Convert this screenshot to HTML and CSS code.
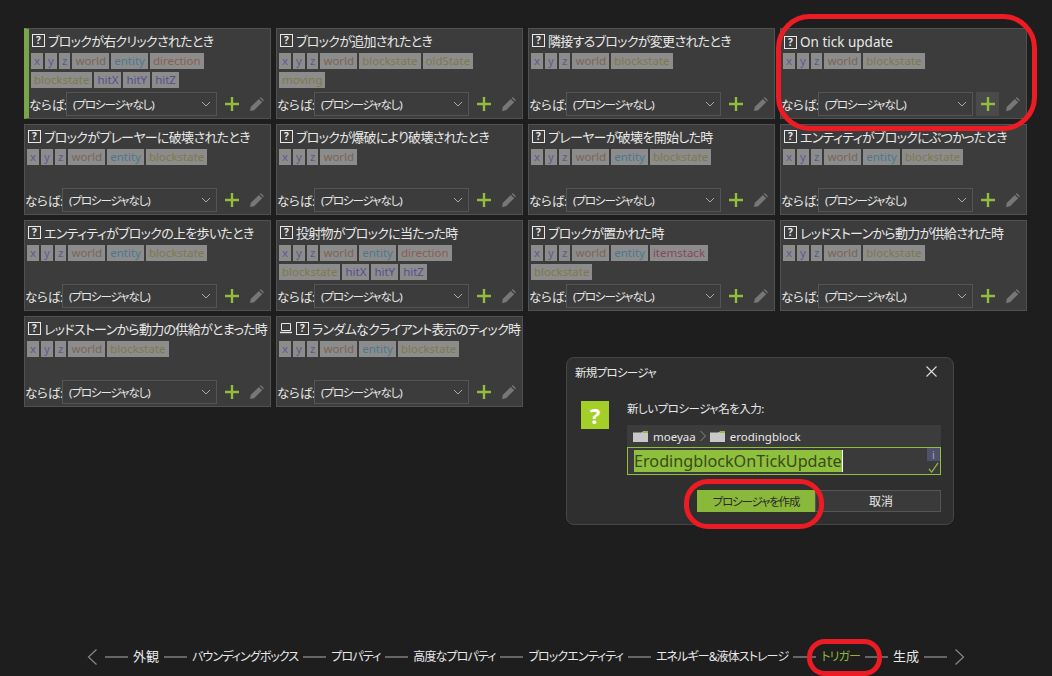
FILE: index.html
```html
<!DOCTYPE html>
<html lang="ja">
<head>
  <meta charset="UTF-8" />
  <title>トリガー</title>
  <link rel="stylesheet" href="styles.css">
</head>
<body>
  <svg class="sprites" width="0" height="0">
    <symbol id="plus" viewBox="0 0 14 14"><path d="M7 0v14M0 7h14" fill="none" stroke="#93bd3f" stroke-width="2.4"/></symbol>
    <symbol id="pencil" viewBox="0 0 16 16"><path d="M1 15l1-4.500L10.500 2l3.500 3.500L5.500 14zM11.500 1l1-1 3.500 3.500-1 1z" fill="#777"/></symbol>
    <symbol id="chev" viewBox="0 0 10 6"><path d="M1 1l4 4 4-4" fill="none" stroke="#aaa" stroke-width="1"/></symbol>
    <symbol id="folder" viewBox="0 0 15 11"><path d="M0 3h15v8H0z" fill="#c8c8c8"/><path d="M0 3V1.500h8L11 0h4v3z" fill="#c8c8c8"/><path d="M9 2l2.500-2H15v2z" fill="#8fc03c"/></symbol>
  </svg>

  <div class="page">
    <div class="triggers">
      <div class="card card-active">
        <div class="card-title"><span class="help">?</span>ブロックが右クリックされたとき</div>
        <div class="tags"><span class="tag num">x</span><span class="tag num">y</span><span class="tag num">z</span><span class="tag world">world</span><span class="tag entity">entity</span><span class="tag dir">direction</span><span class="tag state">blockstate</span><span class="tag hit">hitX</span><span class="tag hit">hitY</span><span class="tag hit">hitZ</span></div>
        <div class="card-row"><span class="then">ならば:</span><div class="proc">(プロシージャなし)<svg class="proc-arrow"><use href="#chev"/></svg></div><span class="tool"><svg class="plus"><use href="#plus"/></svg></span><span class="tool"><svg class="pencil"><use href="#pencil"/></svg></span></div>
      </div>
      <div class="card">
        <div class="card-title"><span class="help">?</span>ブロックが追加されたとき</div>
        <div class="tags"><span class="tag num">x</span><span class="tag num">y</span><span class="tag num">z</span><span class="tag world">world</span><span class="tag state">blockstate</span><span class="tag state">oldState</span><span class="tag state">moving</span></div>
        <div class="card-row"><span class="then">ならば:</span><div class="proc">(プロシージャなし)<svg class="proc-arrow"><use href="#chev"/></svg></div><span class="tool"><svg class="plus"><use href="#plus"/></svg></span><span class="tool"><svg class="pencil"><use href="#pencil"/></svg></span></div>
      </div>
      <div class="card">
        <div class="card-title"><span class="help">?</span>隣接するブロックが変更されたとき</div>
        <div class="tags"><span class="tag num">x</span><span class="tag num">y</span><span class="tag num">z</span><span class="tag world">world</span><span class="tag state">blockstate</span></div>
        <div class="card-row"><span class="then">ならば:</span><div class="proc">(プロシージャなし)<svg class="proc-arrow"><use href="#chev"/></svg></div><span class="tool"><svg class="plus"><use href="#plus"/></svg></span><span class="tool"><svg class="pencil"><use href="#pencil"/></svg></span></div>
      </div>
      <div class="card">
        <div class="card-title card-title-en"><span class="help">?</span>On tick update</div>
        <div class="tags"><span class="tag num">x</span><span class="tag num">y</span><span class="tag num">z</span><span class="tag world">world</span><span class="tag state">blockstate</span></div>
        <div class="card-row"><span class="then">ならば:</span><div class="proc">(プロシージャなし)<svg class="proc-arrow"><use href="#chev"/></svg></div><span class="tool tool-hover"><svg class="plus"><use href="#plus"/></svg></span><span class="tool"><svg class="pencil"><use href="#pencil"/></svg></span></div>
      </div>

      <div class="card">
        <div class="card-title"><span class="help">?</span>ブロックがプレーヤーに破壊されたとき</div>
        <div class="tags"><span class="tag num">x</span><span class="tag num">y</span><span class="tag num">z</span><span class="tag world">world</span><span class="tag entity">entity</span><span class="tag state">blockstate</span></div>
        <div class="card-row"><span class="then">ならば:</span><div class="proc">(プロシージャなし)<svg class="proc-arrow"><use href="#chev"/></svg></div><span class="tool"><svg class="plus"><use href="#plus"/></svg></span><span class="tool"><svg class="pencil"><use href="#pencil"/></svg></span></div>
      </div>
      <div class="card">
        <div class="card-title"><span class="help">?</span>ブロックが爆破により破壊されたとき</div>
        <div class="tags"><span class="tag num">x</span><span class="tag num">y</span><span class="tag num">z</span><span class="tag world">world</span></div>
        <div class="card-row"><span class="then">ならば:</span><div class="proc">(プロシージャなし)<svg class="proc-arrow"><use href="#chev"/></svg></div><span class="tool"><svg class="plus"><use href="#plus"/></svg></span><span class="tool"><svg class="pencil"><use href="#pencil"/></svg></span></div>
      </div>
      <div class="card">
        <div class="card-title"><span class="help">?</span>プレーヤーが破壊を開始した時</div>
        <div class="tags"><span class="tag num">x</span><span class="tag num">y</span><span class="tag num">z</span><span class="tag world">world</span><span class="tag entity">entity</span><span class="tag state">blockstate</span></div>
        <div class="card-row"><span class="then">ならば:</span><div class="proc">(プロシージャなし)<svg class="proc-arrow"><use href="#chev"/></svg></div><span class="tool"><svg class="plus"><use href="#plus"/></svg></span><span class="tool"><svg class="pencil"><use href="#pencil"/></svg></span></div>
      </div>
      <div class="card">
        <div class="card-title"><span class="help">?</span>エンティティがブロックにぶつかったとき</div>
        <div class="tags"><span class="tag num">x</span><span class="tag num">y</span><span class="tag num">z</span><span class="tag world">world</span><span class="tag entity">entity</span><span class="tag state">blockstate</span></div>
        <div class="card-row"><span class="then">ならば:</span><div class="proc">(プロシージャなし)<svg class="proc-arrow"><use href="#chev"/></svg></div><span class="tool"><svg class="plus"><use href="#plus"/></svg></span><span class="tool"><svg class="pencil"><use href="#pencil"/></svg></span></div>
      </div>

      <div class="card">
        <div class="card-title"><span class="help">?</span>エンティティがブロックの上を歩いたとき</div>
        <div class="tags"><span class="tag num">x</span><span class="tag num">y</span><span class="tag num">z</span><span class="tag world">world</span><span class="tag entity">entity</span><span class="tag state">blockstate</span></div>
        <div class="card-row"><span class="then">ならば:</span><div class="proc">(プロシージャなし)<svg class="proc-arrow"><use href="#chev"/></svg></div><span class="tool"><svg class="plus"><use href="#plus"/></svg></span><span class="tool"><svg class="pencil"><use href="#pencil"/></svg></span></div>
      </div>
      <div class="card">
        <div class="card-title"><span class="help">?</span>投射物がブロックに当たった時</div>
        <div class="tags"><span class="tag num">x</span><span class="tag num">y</span><span class="tag num">z</span><span class="tag world">world</span><span class="tag entity">entity</span><span class="tag dir">direction</span><span class="tag state">blockstate</span><span class="tag hit">hitX</span><span class="tag hit">hitY</span><span class="tag hit">hitZ</span></div>
        <div class="card-row"><span class="then">ならば:</span><div class="proc">(プロシージャなし)<svg class="proc-arrow"><use href="#chev"/></svg></div><span class="tool"><svg class="plus"><use href="#plus"/></svg></span><span class="tool"><svg class="pencil"><use href="#pencil"/></svg></span></div>
      </div>
      <div class="card">
        <div class="card-title"><span class="help">?</span>ブロックが置かれた時</div>
        <div class="tags"><span class="tag num">x</span><span class="tag num">y</span><span class="tag num">z</span><span class="tag world">world</span><span class="tag entity">entity</span><span class="tag item">itemstack</span><span class="tag state">blockstate</span></div>
        <div class="card-row"><span class="then">ならば:</span><div class="proc">(プロシージャなし)<svg class="proc-arrow"><use href="#chev"/></svg></div><span class="tool"><svg class="plus"><use href="#plus"/></svg></span><span class="tool"><svg class="pencil"><use href="#pencil"/></svg></span></div>
      </div>
      <div class="card">
        <div class="card-title"><span class="help">?</span>レッドストーンから動力が供給された時</div>
        <div class="tags"><span class="tag num">x</span><span class="tag num">y</span><span class="tag num">z</span><span class="tag world">world</span><span class="tag state">blockstate</span></div>
        <div class="card-row"><span class="then">ならば:</span><div class="proc">(プロシージャなし)<svg class="proc-arrow"><use href="#chev"/></svg></div><span class="tool"><svg class="plus"><use href="#plus"/></svg></span><span class="tool"><svg class="pencil"><use href="#pencil"/></svg></span></div>
      </div>

      <div class="card">
        <div class="card-title"><span class="help">?</span>レッドストーンから動力の供給がとまった時</div>
        <div class="tags"><span class="tag num">x</span><span class="tag num">y</span><span class="tag num">z</span><span class="tag world">world</span><span class="tag state">blockstate</span></div>
        <div class="card-row"><span class="then">ならば:</span><div class="proc">(プロシージャなし)<svg class="proc-arrow"><use href="#chev"/></svg></div><span class="tool"><svg class="plus"><use href="#plus"/></svg></span><span class="tool"><svg class="pencil"><use href="#pencil"/></svg></span></div>
      </div>
      <div class="card">
        <div class="card-title">
          <svg class="screen" viewBox="0 0 12 12"><path d="M1.500 1.500h9v7h-9z" fill="none" stroke="#e8e8e8"/><path d="M0 10.500h12" stroke="#e8e8e8" stroke-width="1.400"/></svg>
          <span class="help">?</span>ランダムなクライアント表示のティック時
        </div>
        <div class="tags"><span class="tag num">x</span><span class="tag num">y</span><span class="tag num">z</span><span class="tag world">world</span><span class="tag entity">entity</span><span class="tag state">blockstate</span></div>
        <div class="card-row"><span class="then">ならば:</span><div class="proc">(プロシージャなし)<svg class="proc-arrow"><use href="#chev"/></svg></div><span class="tool"><svg class="plus"><use href="#plus"/></svg></span><span class="tool"><svg class="pencil"><use href="#pencil"/></svg></span></div>
      </div>
    </div>

    <nav class="steps">
      <svg class="step-arrow" viewBox="0 0 10 16"><path d="M9.500 .5L1.500 8l8 7.500" fill="none" stroke="#888" stroke-width="1.200"/></svg>
      <i class="step-line"></i><span class="step-kanji">外観</span>
      <i class="step-line"></i><span>バウンディングボックス</span>
      <i class="step-line"></i><span>プロパティ</span>
      <i class="step-line"></i><span>高度なプロパティ</span>
      <i class="step-line"></i><span>ブロックエンティティ</span>
      <i class="step-line"></i><span>エネルギー&amp;液体ストレージ</span>
      <i class="step-line"></i><span class="step-current">トリガー</span>
      <i class="step-line"></i><span class="step-kanji">生成</span>
      <i class="step-line"></i>
      <svg class="step-arrow" viewBox="0 0 10 16"><path d="M.5 .5l8 7.500-8 7.500" fill="none" stroke="#888" stroke-width="1.200"/></svg>
    </nav>
  </div>

  <div class="dialog">
    <div class="dialog-head">
      <span class="dialog-title">新規プロシージャ</span>
      <svg class="dialog-close" viewBox="0 0 11 11"><path d="M.5 .5l10 10M10.500 .5l-10 10" stroke="#ddd" stroke-width="1.100"/></svg>
    </div>
    <div class="dialog-body">
      <div class="dialog-icon">?</div>
      <div class="dialog-main">
        <div class="dialog-label">新しいプロシージャ名を入力:</div>
        <div class="crumbs">
          <svg class="folder"><use href="#folder"/></svg>moeyaa
          <svg class="crumb-sep" viewBox="0 0 6 12"><path d="M.5 1l5 5-5 5" fill="none" stroke="#888"/></svg>
          <svg class="folder"><use href="#folder"/></svg>erodingblock
        </div>
        <div class="name-field">
          <span class="name-selected">ErodingblockOnTickUpdate</span>
          <span class="name-info">i</span>
          <svg class="name-ok" viewBox="0 0 12 12"><path d="M1 7.500l3 3.500 7-10" fill="none" stroke="#93bd3f" stroke-width="1.300"/></svg>
        </div>
        <div class="dialog-buttons">
          <button class="btn btn-primary">プロシージャを作成</button>
          <button class="btn">取消</button>
        </div>
      </div>
    </div>
  </div>

  <div class="ring ring-card"></div>
  <div class="ring ring-button"></div>
  <div class="ring ring-step"></div>
</body>
</html>
```

FILE: styles.css
```css
body {
  margin: 0;
  background-color: #1e1e1e;
  color: #e8e8e8;
  font-family: "Noto Sans", "Noto Sans CJK JP", sans-serif;
  font-feature-settings: "palt" 1;
  overflow: hidden;
}
.sprites {
  position: absolute;
}
.page {
  display: flex;
  flex-direction: column;
  height: 676px;
  box-sizing: border-box;
  padding: 28px 0 0 24px;
}
.triggers {
  display: grid;
  grid-template-columns: repeat(4, 247px);
  grid-auto-rows: 91px;
  gap: 5px;
}
.card {
  display: flex;
  flex-direction: column;
  box-sizing: border-box;
  background-color: #3c3c3c;
  border: 1px solid #515151;
}
.card-active {
  border-left: 5px solid #7aa64a;
}
.card-title {
  display: flex;
  align-items: center;
  box-sizing: border-box;
  height: 24px;
  padding: 0 0 2px 3px;
  font-size: 13px;
  letter-spacing: -0.7px;
  white-space: nowrap;
}
.card-title-en {
  padding: 2px 0 0 3px;
  font-size: 13.500px;
  letter-spacing: 0;
}
.help {
  display: inline-block;
  flex: none;
  box-sizing: border-box;
  width: 13px;
  height: 13px;
  margin-right: 3px;
  border: 1px solid #e8e8e8;
  font-size: 10px;
  font-weight: bold;
  letter-spacing: 0;
  line-height: 11px;
  text-align: center;
}
.screen {
  flex: none;
  width: 12px;
  height: 12px;
  margin-right: 4px;
}
.tags {
  display: flex;
  flex-wrap: wrap;
  align-content: flex-start;
  gap: 3px 2px;
  height: 39px;
  padding: 0 30px 0 2px;
}
.tag {
  height: 16px;
  padding: 0 3px;
  background-color: #8c8c8c;
  font-size: 11.500px;
  line-height: 16px;
}
.num { color: #5c5c90; }
.world { color: #7a6654; }
.entity { color: #4a7a8c; }
.dir { color: #8a5f4e; }
.state { color: #7d7a48; }
.hit { color: #564f8e; }
.item { color: #8a4560; }
.card-row {
  display: flex;
  align-items: center;
  height: 24px;
  padding-right: 2px;
}
.then {
  width: 37px;
  flex: none;
  font-size: 12.500px;
  letter-spacing: -0.2px;
  white-space: nowrap;
}
.proc {
  display: flex;
  align-items: center;
  justify-content: space-between;
  flex: 1;
  box-sizing: border-box;
  height: 24px;
  padding: 0 5px 0 6px;
  background-color: #3c3c3c;
  border: 1px solid #555;
  font-size: 11.500px;
  letter-spacing: -1.1px;
}
.proc-arrow {
  width: 10px;
  height: 6px;
}
.tool {
  display: flex;
  align-items: center;
  justify-content: center;
  flex: none;
  width: 23px;
  height: 24px;
  margin-left: 3px;
}
.tool + .tool {
  margin-left: 2px;
}
.tool-hover {
  background-color: #4a4a4a;
}
.plus {
  width: 14px;
  height: 14px;
}
.pencil {
  width: 15px;
  height: 15px;
}
.steps {
  display: flex;
  align-items: center;
  justify-content: center;
  gap: 5px;
  margin: auto 0 9px -24px;
  height: 20px;
  font-size: 12px;
  letter-spacing: -0.9px;
  line-height: 16px;
  white-space: nowrap;
}
.step-kanji {
  margin-top: -2px;
  font-size: 13px;
  letter-spacing: 0;
}
.step-line {
  flex: none;
  width: 23px;
  height: 2px;
  background-color: #666;
}
.step-arrow {
  flex: none;
  width: 10px;
  height: 16px;
  margin: 0 3px;
}
.step-current {
  color: #8fb53c;
}
.dialog {
  position: absolute;
  left: 566px;
  top: 357px;
  width: 388px;
  height: 168px;
  box-sizing: border-box;
  background-color: #2f2f2f;
  border: 1px solid #454545;
  border-radius: 8px;
  font-size: 11.500px;
}
.dialog-head {
  display: flex;
  align-items: center;
  justify-content: space-between;
  height: 27px;
  padding: 0 16px 0 8px;
}
.dialog-title {
  letter-spacing: -0.7px;
}
.dialog-close {
  width: 11px;
  height: 11px;
}
.dialog-body {
  display: flex;
  padding: 16px 12px 0 14px;
}
.dialog-icon {
  width: 28px;
  height: 28px;
  margin-right: 18px;
  background-color: #a4cf28;
  color: #fff;
  font-size: 22px;
  font-weight: bold;
  line-height: 28px;
  text-align: center;
}
.dialog-main {
  flex: 1;
}
.dialog-label {
  height: 24px;
  letter-spacing: -0.5px;
  line-height: 16px;
}
.crumbs {
  display: flex;
  align-items: center;
  height: 22px;
  padding-left: 6px;
  background-color: #3c3c3c;
}
.folder {
  width: 15px;
  height: 11px;
  margin-right: 5px;
}
.crumb-sep {
  width: 6px;
  height: 12px;
  margin: 0 4px;
}
.name-field {
  position: relative;
  box-sizing: border-box;
  height: 28px;
  padding: 2px 6px;
  background-color: #3a3a3a;
  border: 1px solid #93bd3f;
  color: #3a4a20;
  font-size: 16.200px;
  line-height: 22px;
}
.name-selected {
  display: inline-block;
  background-color: #8fc03c;
  border-right: 1px solid #fff;
}
.name-info {
  position: absolute;
  right: 0;
  top: 0;
  width: 13px;
  height: 13px;
  background-color: #50506a;
  color: #9aa0d0;
  font-size: 11px;
  line-height: 13px;
  text-align: center;
}
.name-ok {
  position: absolute;
  right: 1px;
  bottom: 1px;
  width: 11px;
  height: 11px;
}
.dialog-buttons {
  display: flex;
  justify-content: flex-end;
  margin-top: 15px;
}
.btn {
  width: 126px;
  height: 22px;
  padding: 0 0 0 6px;
  background-color: #3a3a3a;
  border: 1px solid #555;
  color: #e8e8e8;
  font-family: inherit;
  font-feature-settings: inherit;
  font-size: 12px;
}
.btn-primary {
  width: 118px;
  padding: 0;
  background-color: #8ab83a;
  border-color: #8ab83a;
  color: #2a2a2a;
  font-size: 11.500px;
  letter-spacing: -1.2px;
}
.ring {
  position: absolute;
  box-sizing: border-box;
  border: 5px solid #ed1c24;
}
.ring-card {
  left: 776px;
  top: 14px;
  width: 261px;
  height: 117px;
  border-radius: 34px;
}
.ring-button {
  left: 684px;
  top: 479px;
  width: 140px;
  height: 50px;
  border-radius: 24px;
}
.ring-step {
  left: 807px;
  top: 639px;
  width: 75px;
  height: 37px;
  border-radius: 18px;
}
```
